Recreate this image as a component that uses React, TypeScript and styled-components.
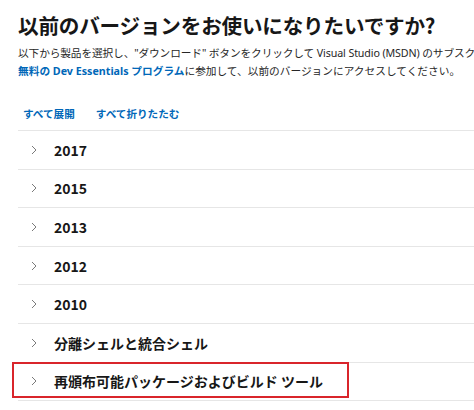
import React from "react";
import styled, { createGlobalStyle } from "styled-components";

const Global = createGlobalStyle`
  html, body { margin: 0; padding: 0; background: #fff; overflow: hidden; }
  body { font-family: "Noto Sans", "Noto Sans CJK JP", sans-serif; color: #171717; }
`;

const Page = styled.main`
  width: 474px;
  height: 410px;
  padding-left: 18px;
  box-sizing: border-box;
  overflow: hidden;
`;

const Title = styled.h1`
  margin: 12px 0 5px;
  font-size: 20.6px;
  line-height: 27px;
  font-weight: 700;
  letter-spacing: -0.2px;
  white-space: nowrap;
  font-family: "Noto Sans CJK JP", sans-serif;
`;

const Lead = styled.p`
  margin: 0;
  font-size: 10.7px;
  line-height: 18px;
  color: #262626;
  white-space: nowrap;
  font-family: "Noto Sans", "Noto Sans CJK JP", sans-serif;
`;

const Line = styled.span<{ $tight?: boolean }>`
  display: block;
  letter-spacing: ${(p) => (p.$tight ? "-0.12px" : "0")};
`;

const InlineLink = styled.a`
  color: #0067b8;
  font-weight: 700;
  text-decoration: none;
`;

const Controls = styled.div`
  display: flex;
  gap: 21px;
  padding: 26px 5px 8px;
`;

const ControlLink = styled.a`
  color: #0067b8;
  font-size: 10.6px;
  line-height: 16px;
  font-weight: 700;
  text-decoration: none;
  font-family: "Noto Sans CJK JP", sans-serif;
`;

const List = styled.ul`
  list-style: none;
  margin: 0;
  padding: 0;
  border-bottom: 1px solid #e6e6e6;
`;

const Row = styled.li`
  position: relative;
  display: flex;
  align-items: center;
  height: 37.6px;
  border-top: 1px solid #e6e6e6;
  padding-left: 13px;
  gap: 17px;
`;

const Chevron = styled.svg`
  width: 6px;
  height: 10px;
  flex: none;
`;

const Label = styled.span`
  font-size: 14px;
  font-weight: 700;
  color: #171717;
  white-space: nowrap;
  font-family: "Noto Sans CJK JP", sans-serif;
`;

const Highlight = styled.span`
  position: absolute;
  left: -6px;
  top: -1px;
  width: 337px;
  height: 36px;
  border: 2.5px solid #d9252b;
  box-sizing: border-box;
  pointer-events: none;
`;

const items = [
  "2017",
  "2015",
  "2013",
  "2012",
  "2010",
  "分離シェルと統合シェル",
  "再頒布可能パッケージおよびビルド ツール",
];

export default function App() {
  return (
    <>
      <Global />
      <Page>
        <Title>以前のバージョンをお使いになりたいですか?</Title>
        <Lead>
          <Line $tight>
            以下から製品を選択し、"ダウンロード" ボタンをクリックして Visual Studio (MSDN) のサブスク
          </Line>
          <Line>
            <InlineLink href="#">無料の Dev Essentials プログラム</InlineLink>
            に参加して、以前のバージョンにアクセスしてください。
          </Line>
        </Lead>
        <Controls>
          <ControlLink href="#">すべて展開</ControlLink>
          <ControlLink href="#">すべて折りたたむ</ControlLink>
        </Controls>
        <List>
          {items.map((t, i) => (
            <Row key={t}>
              <Chevron viewBox="0 0 6 10">
                <polyline points="1,1 5,5 1,9" fill="none" stroke="#7a7a7a" strokeWidth="1" />
              </Chevron>
              <Label>{t}</Label>
              {i === items.length - 1 && <Highlight />}
            </Row>
          ))}
        </List>
      </Page>
    </>
  );
}
